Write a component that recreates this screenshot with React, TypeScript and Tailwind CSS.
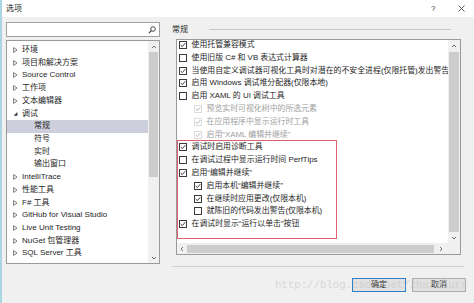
import React from 'react'

type TreeItem = { t: string; level: number; arrow?: 'right' | 'down'; selected?: boolean }

const treeItems: TreeItem[] = [
  { t: '环境', level: 0, arrow: 'right' },
  { t: '项目和解决方案', level: 0, arrow: 'right' },
  { t: 'Source Control', level: 0, arrow: 'right' },
  { t: '工作项', level: 0, arrow: 'right' },
  { t: '文本编辑器', level: 0, arrow: 'right' },
  { t: '调试', level: 0, arrow: 'down' },
  { t: '常规', level: 1, selected: true },
  { t: '符号', level: 1 },
  { t: '实时', level: 1 },
  { t: '输出窗口', level: 1 },
  { t: 'IntelliTrace', level: 0, arrow: 'right' },
  { t: '性能工具', level: 0, arrow: 'right' },
  { t: 'F# 工具', level: 0, arrow: 'right' },
  { t: 'GitHub for Visual Studio', level: 0, arrow: 'right' },
  { t: 'Live Unit Testing', level: 0, arrow: 'right' },
  { t: 'NuGet 包管理器', level: 0, arrow: 'right' },
  { t: 'SQL Server 工具', level: 0, arrow: 'right' },
  { t: 'Web', level: 0, arrow: 'right' },
]

type Opt = { t: string; checked: boolean; indent?: boolean; disabled?: boolean }

const options: Opt[] = [
  { t: '使用托管兼容模式', checked: true },
  { t: '使用旧版 C# 和 VB 表达式计算器', checked: false },
  { t: '当使用自定义调试器可视化工具时对潜在的不安全进程(仅限托管)发出警告', checked: true },
  { t: '启用 Windows 调试堆分配器(仅限本地)', checked: true },
  { t: '启用 XAML 的 UI 调试工具', checked: false },
  { t: '预览实时可视化树中的所选元素', checked: true, indent: true, disabled: true },
  { t: '在应用程序中显示运行时工具', checked: true, indent: true, disabled: true },
  { t: '启用“XAML 编辑并继续”', checked: true, indent: true, disabled: true },
  { t: '调试时启用诊断工具', checked: true },
  { t: '在调试过程中显示运行时间 PerfTips', checked: false },
  { t: '启用“编辑并继续”', checked: true },
  { t: '启用本机“编辑并继续”', checked: true, indent: true },
  { t: '在继续时应用更改(仅限本机)', checked: true, indent: true },
  { t: '就陈旧的代码发出警告(仅限本机)', checked: false, indent: true },
  { t: '在调试时显示“运行以单击”按钮', checked: true },
]

function Arrow({ dir }: { dir: 'up' | 'down' | 'left' | 'right' }) {
  const d = {
    up: 'M1 4 L3 2 L5 4',
    down: 'M1 2 L3 4 L5 2',
    left: 'M4 1 L2 3 L4 5',
    right: 'M2 1 L4 3 L2 5',
  }[dir]
  return (
    <svg width="6" height="6" viewBox="0 0 6 6">
      <path d={d} fill="none" stroke="#606060" strokeWidth="0.9" />
    </svg>
  )
}

function Check({ checked, disabled }: { checked: boolean; disabled?: boolean }) {
  return (
    <span
      className={`w-[8px] h-[8px] shrink-0 flex items-center justify-center bg-white border ${
        disabled ? 'border-[#dcdcdc]' : 'border-[#3a3a3a]'
      }`}
    >
      {checked && (
        <svg width="6" height="6" viewBox="0 0 6 6">
          <path d="M0.7 3 L2.3 4.6 L5.3 1.2" fill="none" stroke={disabled ? '#a8a8a8' : '#222'} strokeWidth="0.9" />
        </svg>
      )}
    </span>
  )
}

export default function App() {
  return (
    <div className="w-[474px] h-[303px] bg-[#f0f0f0] flex overflow-hidden relative text-[8px] leading-none text-[#1e1e1e] font-['Liberation_Sans','Noto_Sans_CJK_SC',sans-serif]">
      <div className="w-[2px] shrink-0 bg-[#a9d6e2]" />
      <div className="flex-1 flex flex-col">
        {/* title bar */}
        <div className="h-[17px] bg-white flex items-center pl-[4px]">
          <span className="text-[8px]">选项</span>
          <span className="ml-auto w-[8px] text-[8px] text-[#333] mr-[19px]">?</span>
          <svg width="7" height="7" viewBox="0 0 7 7" className="mr-[9px]">
            <path d="M0.5 0.5 L6.5 6.5 M6.5 0.5 L0.5 6.5" stroke="#333" strokeWidth="0.8" />
          </svg>
        </div>

        <div className="flex flex-1 pt-[5px]">
          {/* left column */}
          <div className="ml-[4px] w-[154px] flex flex-col">
            <div className="h-[15px] bg-white border border-[#a0a0a0] flex items-center justify-end pr-[3px]">
              <svg width="8" height="8" viewBox="0 0 8 8">
                <circle cx="5" cy="3" r="2.3" fill="none" stroke="#333" strokeWidth="0.9" />
                <path d="M3.4 4.6 L0.8 7.2" stroke="#333" strokeWidth="1.1" />
              </svg>
            </div>
            <div className="mt-[3px] h-[224px] bg-white border border-[#9a9a9a] flex overflow-hidden">
              <div className="flex-1 flex flex-col pt-[2.6px] overflow-hidden">
                {treeItems.map((it) => (
                  <div
                    key={it.t}
                    className={`h-[12.73px] shrink-0 flex items-center ${it.selected ? 'bg-[#cdcfdc]' : ''} ${
                      it.level === 1 ? 'pl-[27px]' : 'pl-[6px]'
                    }`}
                  >
                    {it.arrow === 'right' && (
                      <svg width="5" height="6" viewBox="0 0 5 6" className="mr-[4px]">
                        <path d="M0.6 0.6 L4 3 L0.6 5.4 Z" fill="none" stroke="#5a5a5a" strokeWidth="0.8" />
                      </svg>
                    )}
                    {it.arrow === 'down' && (
                      <svg width="5" height="6" viewBox="0 0 5 6" className="mr-[4px]">
                        <path d="M4.4 1 L4.4 4.8 L0.6 4.8 Z" fill="#333" />
                      </svg>
                    )}
                    <span className="whitespace-nowrap">{it.t}</span>
                  </div>
                ))}
              </div>
              <div className="w-[11px] shrink-0 bg-[#f0f0f0] flex flex-col">
                <div className="h-[11px] flex items-center justify-center">
                  <Arrow dir="up" />
                </div>
                <div className="h-[125px] bg-[#cdcdcd] mx-[1px]" />
                <div className="flex-1" />
                <div className="h-[11px] flex items-center justify-center">
                  <Arrow dir="down" />
                </div>
              </div>
            </div>
          </div>

          {/* right column */}
          <div className="ml-[12px] w-[294px] flex flex-col">
            <div className="h-[15px] flex items-center">
              <span>常规</span>
              <div className="ml-[21px] w-[242px] h-px bg-[#c8c8c8]" />
            </div>
            <div className="mt-[2px] ml-[4px] w-[285px] h-[216px] bg-white border border-[#9a9a9a] flex flex-col relative">
              <div className="flex-1 flex overflow-hidden">
                <div className="flex-1 flex flex-col -mt-[1.4px] overflow-hidden text-[7.9px]">
                  {options.map((o) => (
                    <div
                      key={o.t}
                      className={`h-[12.8px] shrink-0 flex items-center gap-[5px] whitespace-nowrap ${
                        o.indent ? 'pl-[16.5px]' : 'pl-[1.5px]'
                      } ${o.disabled ? 'text-[#a0a0a0]' : ''}`}
                    >
                      <Check checked={o.checked} disabled={o.disabled} />
                      <span>{o.t}</span>
                    </div>
                  ))}
                </div>
                <div className="w-[12px] shrink-0 bg-[#f0f0f0] flex flex-col">
                  <div className="h-[12px] flex items-center justify-center">
                    <Arrow dir="up" />
                  </div>
                  <div className="flex-1 bg-[#cdcdcd] mx-[1px]" />
                  <div className="h-[11px] flex items-center justify-center">
                    <Arrow dir="down" />
                  </div>
                </div>
              </div>
              <div className="h-[11px] shrink-0 flex bg-[#f0f0f0]">
                <div className="w-[10px] flex items-center justify-center">
                  <Arrow dir="left" />
                </div>
                <div className="w-[247px] my-[1.5px] bg-[#cdcdcd]" />
                <div className="w-[14px] flex items-center justify-center">
                  <Arrow dir="right" />
                </div>
                <div className="flex-1 bg-[#f0f0f0]" />
              </div>
              {/* annotation box */}
              <div className="absolute left-[-0.5px] top-[100px] w-[160px] h-[99px] border border-[#e0606e] pointer-events-none" />
            </div>

            <div className="mt-[11px] h-px w-[292px] bg-[#d0d0d0]" />

            <div className="mt-[11px] flex justify-end gap-[6px]">
              <div className="w-[54px] h-[14px] bg-[#e1e1e1] border border-[#2f7fc8] flex items-center justify-center">
                确定
              </div>
              <div className="w-[54px] h-[14px] bg-[#e1e1e1] border border-[#adadad] flex items-center justify-center">
                取消
              </div>
            </div>
          </div>
        </div>
      </div>

      {/* watermark */}
      <div className="absolute left-[275px] top-[280px] text-[10.7px] leading-none font-['Liberation_Mono',monospace] text-[#c4c4c4]/60 pointer-events-none whitespace-nowrap">
        http://blog.csdn.net/zhankeurs
      </div>
    </div>
  )
}
